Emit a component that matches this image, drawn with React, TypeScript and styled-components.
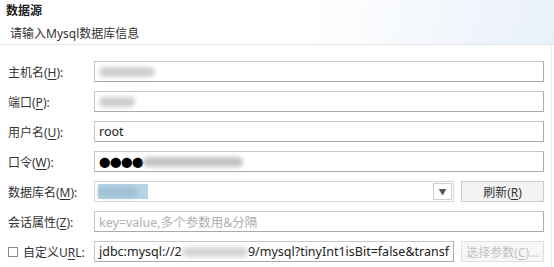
import React from "react";
import styled, { createGlobalStyle } from "styled-components";

const Global = createGlobalStyle`
  html, body { margin: 0; padding: 0; background: #ffffff; }
  body {
    font-family: "Noto Sans", "Noto Sans CJK SC", sans-serif;
    font-size: 12px;
    color: #333;
    width: 554px;
    height: 267px;
    overflow: hidden;
  }
`;

const Page = styled.div`
  width: 554px;
  height: 267px;
  display: flex;
  flex-direction: column;
  background: #fff;
`;

const Header = styled.div`
  height: 44px;
  padding: 3px 6px 0;
  box-sizing: border-box;
  height: 45px;
  border-bottom: 1px solid #e6e6e6;
  background: linear-gradient(100deg, #ffffff 0%, #ffffff 55%, #e9f0fa 100%);
  display: flex;
  flex-direction: column;
  gap: 6px;
`;

const Title = styled.div`
  font-weight: 700;
  font-size: 12px;
  line-height: 16px;
  color: #222;
`;

const Subtitle = styled.div`
  font-size: 12px;
  line-height: 18px;
  color: #333;
  padding-left: 4px;
`;

const Body = styled.div`
  flex: 1;
  padding: 16px 8px 0 8px;
  margin-right: 2px;
  border-right: 1px solid #e3ecf7;
  display: flex;
  flex-direction: column;
  gap: 9px;
`;

const Row = styled.div`
  display: grid;
  grid-template-columns: 86px 1fr;
  align-items: center;
  height: 21px;
  width: 536px;
`;

const Label = styled.label`
  display: flex;
  align-items: center;
  font-size: 12px;
  color: #333;
  white-space: nowrap;
  u { text-decoration: underline; text-underline-offset: 2px; }
`;

const Input = styled.div<{ $muted?: boolean }>`
  height: 21px;
  box-sizing: border-box;
  border: 1px solid #c6c6c6;
  border-right-color: #aaaaaa;
  border-bottom-color: #aaaaaa;
  background: #fff;
  display: flex;
  align-items: center;
  padding: 0 4px;
  font-size: 12.5px;
  color: ${(p) => (p.$muted ? "#b0b0b0" : "#222")};
  white-space: nowrap;
  overflow: hidden;
`;

const Split = styled.div`
  display: grid;
  grid-template-columns: 360px 83px;
  gap: 7px;
  align-items: center;
`;

const Combo = styled.div`
  height: 21px;
  box-sizing: border-box;
  border: 1px solid #d6d6d6;
  background: #fff;
  display: flex;
  align-items: center;
  justify-content: space-between;
  padding: 0 1px 0 2px;
`;

const Arrow = styled.div`
  width: 19px;
  height: 17px;
  box-sizing: border-box;
  border: 1px solid #d0d0d0;
  display: flex;
  align-items: center;
  justify-content: center;
  font-size: 8px;
  color: #555;
`;

const Button = styled.button<{ $disabled?: boolean }>`
  height: 21px;
  box-sizing: border-box;
  border: 1px solid ${(p) => (p.$disabled ? "#e0e0e0" : "#cccccc")};
  background: ${(p) => (p.$disabled ? "#f7f7f7" : "#f3f3f3")};
  font-family: "Noto Sans", "Noto Sans CJK SC", sans-serif;
  font-size: 12px;
  color: ${(p) => (p.$disabled ? "#c0c0c0" : "#333")};
  padding: 0;
  white-space: nowrap;
  u { text-decoration: underline; text-underline-offset: 2px; }
`;

const Blob = styled.span<{ $w: number; $tone?: string }>`
  display: inline-block;
  width: ${(p) => p.$w}px;
  height: 10px;
  border-radius: 5px;
  background: ${(p) => p.$tone ?? "#c9c9c9"};
  filter: blur(2px);
  vertical-align: middle;
`;

const Selected = styled.span`
  display: inline-flex;
  align-items: center;
  height: 15px;
  width: 50px;
  margin-left: 1px;
  background: #b7d4e6;
  filter: blur(0.6px);
`;

const Dots = styled.span`
  font-size: 11.5px;
  letter-spacing: -0.5px;
  color: #000;
`;

const Check = styled.span`
  width: 10px;
  height: 10px;
  box-sizing: border-box;
  border: 1px solid #8a8a8a;
  background: #fff;
  margin-right: 5px;
`;

export default function App() {
  return (
    <>
      <Global />
      <Page>
        <Header>
          <Title>数据源</Title>
          <Subtitle>请输入Mysql数据库信息</Subtitle>
        </Header>
        <Body>
          <Row>
            <Label><span>主机名(<u>H</u>):</span></Label>
            <Input>
              <Blob $w={56} $tone="#d0d0d0" />
            </Input>
          </Row>
          <Row>
            <Label><span>端口(<u>P</u>):</span></Label>
            <Input>
              <Blob $w={36} $tone="#cfcfcf" />
            </Input>
          </Row>
          <Row>
            <Label><span>用户名(<u>U</u>):</span></Label>
            <Input>root</Input>
          </Row>
          <Row>
            <Label><span>口令(<u>W</u>):</span></Label>
            <Input>
              <Dots>●●●●</Dots>
              <Blob $w={100} $tone="#c4c4c4" />
            </Input>
          </Row>
          <Row>
            <Label><span>数据库名(<u>M</u>):</span></Label>
            <Split>
              <Combo>
                <Selected>
                  <Blob $w={40} $tone="#9fbfd2" />
                </Selected>
                <Arrow>▼</Arrow>
              </Combo>
              <Button>
                刷新(<u>R</u>)
              </Button>
            </Split>
          </Row>
          <Row>
            <Label><span>会话属性(<u>Z</u>):</span></Label>
            <Input $muted>key=value,多个参数用&amp;分隔</Input>
          </Row>
          <Row>
            <Label>
              <Check />
              <span>自定义U<u>R</u>L:</span>
            </Label>
            <Split>
              <Input>
                jdbc:mysql://2
                <Blob $w={92} $tone="#d6d6d6" />
                9/mysql?tinyInt1isBit=false&amp;transf
              </Input>
              <Button $disabled>
                选择参数(<u>C</u>)...
              </Button>
            </Split>
          </Row>
        </Body>
      </Page>
    </>
  );
}
